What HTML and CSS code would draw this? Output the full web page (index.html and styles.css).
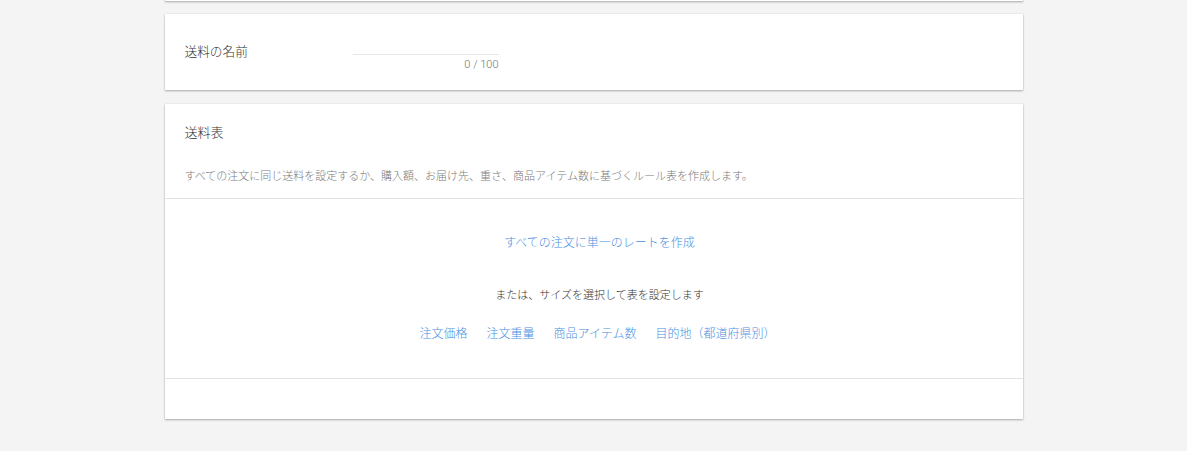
FILE: index.html
```html
<!DOCTYPE html>
<html lang="ja">
<head>
<meta charset="utf-8">
<title>送料</title>
<link rel="stylesheet" href="styles.css">
</head>
<body>
<div class="page">
  <div class="card card-top"></div>

  <div class="card name-card">
    <div class="name-label">送料の名前</div>
    <div class="field">
      <div class="field-line"></div>
      <div class="counter">0 / 100</div>
    </div>
  </div>

  <div class="card table-card">
    <div class="table-head">
      <div class="table-title">送料表</div>
      <div class="table-desc">すべての注文に同じ送料を設定するか、購入額、お届け先、重さ、商品アイテム数に基づくルール表を作成します。</div>
    </div>
    <div class="table-body">
      <a class="link single">すべての注文に単一のレートを作成</a>
      <div class="or-text">または、サイズを選択して表を設定します</div>
      <div class="options">
        <a class="link">注文価格</a>
        <a class="link">注文重量</a>
        <a class="link">商品アイテム数</a>
        <a class="link">目的地（都道府県別）</a>
      </div>
    </div>
    <div class="table-foot"></div>
  </div>
</div>
</body>
</html>
```
FILE: styles.css
```css
html, body {
  margin: 0;
  padding: 0;
  background: #f4f4f4;
}
body {
  font-family: "Noto Sans CJK JP", "Noto Sans", Roboto, sans-serif;
  font-weight: 300;
  color: #333;
  min-height: 451px;
}
.page {
  width: 858px;
  margin: 0 auto;
  padding-bottom: 30px;
  display: flex;
  flex-direction: column;
}
.card {
  background: #fff;
  box-shadow: 0 1px 2px rgba(0,0,0,0.3), 0 0 1px rgba(0,0,0,0.12);
}
.card-top {
  height: 40px;
  margin-top: -39px;
}
.name-card {
  margin-top: 13px;
  height: 76px;
  display: flex;
  align-items: flex-start;
  padding-left: 20px;
  box-sizing: border-box;
}
.name-label {
  width: 168px;
  font-size: 12.7px;
  line-height: 20px;
  margin-top: 27px;
  color: #333;
}
.field {
  width: 146px;
  margin-top: 40px;
  display: flex;
  flex-direction: column;
}
.field-line {
  height: 1px;
  background: #e6e6e6;
}
.counter {
  font-family: Roboto, "Liberation Sans", sans-serif;
  font-size: 11px;
  line-height: 14px;
  margin-top: 3px;
  color: #757575;
  text-align: right;
}
.table-card {
  margin-top: 14px;
  display: flex;
  flex-direction: column;
}
.table-head {
  padding: 18px 20px 13px;
  border-bottom: 1px solid #e3e3e3;
}
.table-title {
  font-size: 13px;
  line-height: 20px;
  color: #333;
}
.table-desc {
  margin-top: 23px;
  font-size: 11px;
  line-height: 20px;
  color: #7a7a7a;
}
.table-body {
  height: 179px;
  display: flex;
  flex-direction: column;
  align-items: center;
  padding-left: 12px;
  border-bottom: 1px solid #e3e3e3;
}
.link {
  color: #4a90e2;
  font-size: 12px;
  line-height: 20px;
  cursor: pointer;
}
.single {
  margin-top: 33px;
}
.or-text {
  margin-top: 32px;
  font-size: 11px;
  line-height: 20px;
  color: #333;
}
.options {
  margin-top: 19px;
  display: flex;
  gap: 19px;
  margin-left: -4px;
}
.table-foot {
  height: 40px;
}
```
